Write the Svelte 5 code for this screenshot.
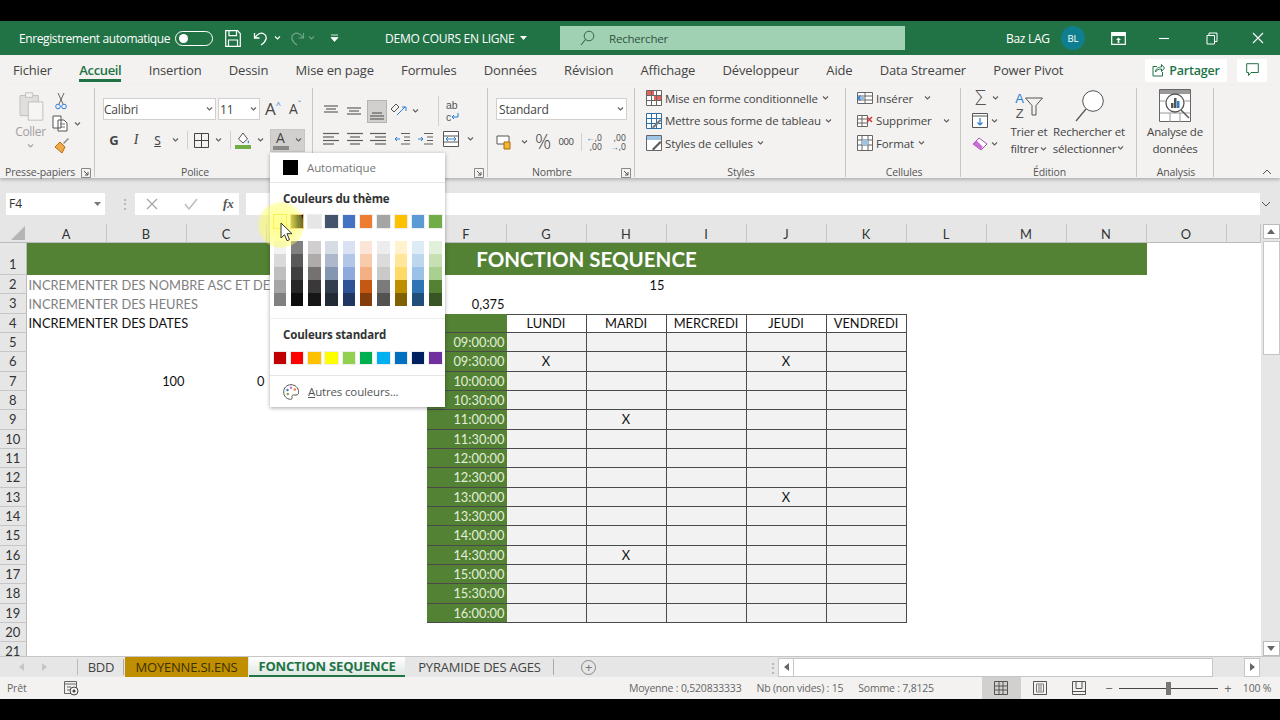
<script>
  const tabs = ['Fichier','Accueil','Insertion','Dessin','Mise en page','Formules','Données','Révision','Affichage','Développeur','Aide','Data Streamer','Power Pivot'];
  const cols = ['A','B','C','D','E','F','G','H','I','J','K','L','M','N','O'];
  const rows = Array.from({length: 21}, (_, i) => i + 1);
  const days = ['LUNDI','MARDI','MERCREDI','JEUDI','VENDREDI'];
  const times = ['09:00:00','09:30:00','10:00:00','10:30:00','11:00:00','11:30:00','12:00:00','12:30:00','13:00:00','13:30:00','14:00:00','14:30:00','15:00:00','15:30:00','16:00:00'];
  // row number -> day index
  const marks = {6:[0,3], 9:[1], 13:[3], 16:[1]};

  // alignment icons: [x1, x2, y] for each stroke
  const alignTop = [[1,15,2],[3,13,5],[1,15,8]];
  const alignMid = [[1,15,4],[3,13,7],[1,15,10]];
  const alignBot = [[3,13,6],[1,15,9],[1,15,12]];
  const alignLeft = [[0,16,1.5],[0,11,5],[0,16,8.5],[0,11,12]];
  const alignCenter = [[0,16,1.5],[3,13,5],[0,16,8.5],[3,13,12]];
  const alignRight = [[0,16,1.5],[5,16,5],[0,16,8.5],[5,16,12]];

  const theme = [
    ['#ffffff','#f2f2f2','#d9d9d9','#bfbfbf','#a6a6a6','#808080'],
    ['#000000','#808080','#595959','#404040','#262626','#0d0d0d'],
    ['#e7e6e6','#d0cece','#afabab','#767171','#3a3838','#171616'],
    ['#44546a','#d6dce4','#adb9ca','#8497b0','#333f4f','#222b35'],
    ['#4472c4','#d9e1f2','#b4c6e7','#8ea9db','#2f5496','#203764'],
    ['#ed7d31','#fce4d6','#f8cbad','#f4b084','#c65911','#833c0c'],
    ['#a5a5a5','#ededed','#dbdbdb','#c9c9c9','#7b7b7b','#525252'],
    ['#ffc000','#fff2cc','#ffe699','#ffd966','#bf8f00','#806000'],
    ['#5b9bd5','#ddebf7','#bdd7ee','#9bc2e6','#2f75b5','#1f4e78'],
    ['#70ad47','#e2efda','#c6e0b4','#a9d08e','#548235','#375623']
  ];
  const standard = ['#c00000','#ff0000','#ffc000','#ffff00','#92d050','#00b050','#00b0f0','#0070c0','#002060','#7030a0'];
</script>

{#snippet caret(w = 9, color = '#605e5c')}
  <svg class="caret" width={w} height="10" viewBox="0 0 9 10"><path d="M2 3.5l2.5 2.5L7 3.5" fill="none" stroke={color} stroke-width="1.1"/></svg>
{/snippet}

{#snippet launcher()}
  <svg class="launch" width="10" height="10" viewBox="0 0 10 10"><path d="M.5 9.5v-9h9v9z" fill="none" stroke="#8a8886"/><path d="M3 3l4 4M7 4v3H4" fill="none" stroke="#555"/></svg>
{/snippet}

{#snippet lines(strokes)}
  <svg width="16" height="14" viewBox="0 0 16 14">
    {#each strokes as s}<line x1={s[0]} x2={s[1]} y1={s[2]} y2={s[2]} stroke="#605e5c" stroke-width="1.2"/>{/each}
  </svg>
{/snippet}

<div class="screen">
  <header class="titlebar">
    <span class="autosave">Enregistrement automatique</span>
    <span class="toggle"><i></i></span>
    <svg class="save" width="16" height="17" viewBox="0 0 16 17"><path d="M.7.7h11.8l2.8 2.8v12.8H.7zM4 .7v5h7.5v-5M3.5 16.3V10h9v6.3" fill="none" stroke="#fff" stroke-width="1.2"/></svg>
    <svg class="undo" width="17" height="17" viewBox="0 0 17 17"><path d="M1.5 3v5h5M2 8c2-4 6-6 9-4 3.500 2 3 7-3 11" fill="none" stroke="#fff" stroke-width="1.3"/></svg>
    {@render caret(9, '#fff')}
    <svg class="redo" width="17" height="17" viewBox="0 0 17 17"><path d="M15.500 3v5h-5M15 8c-2-4-6-6-9-4-3.500 2-3 7 3 11" fill="none" stroke="#6ea488" stroke-width="1.2"/></svg>
    {@render caret(9, '#6ea488')}
    <svg class="qat" width="9" height="10" viewBox="0 0 9 10"><path d="M1 2h7M1 4.500h7L4.500 8.500z" fill="#fff" stroke="#fff" stroke-width=".8"/></svg>
    <span class="doc">DEMO COURS EN LIGNE</span>
    <svg class="doc-caret" width="7" height="4" viewBox="0 0 7 4"><path d="M0 0h7L3.500 4z" fill="#fff"/></svg>
    <div class="search">
      <svg width="16" height="17" viewBox="0 0 16 17"><circle cx="10" cy="6" r="4.800" fill="none" stroke="#2f6b4a" stroke-width="1"/><path d="M6.500 9.500L2 15" stroke="#2f6b4a" stroke-width="1.100"/></svg>
      <span>Rechercher</span>
    </div>
    <span class="user">Baz LAG</span>
    <span class="avatar">BL</span>
    <svg class="display" width="15" height="13" viewBox="0 0 15 13"><path d="M.7.7h13.600v11.600H.7z" fill="none" stroke="#fff" stroke-width="1.200"/><path d="M1 1h13v3H1z" fill="#fff"/><path d="M7.500 5.500l-2.500 2.500h1.700v3h1.600v-3H10z" fill="#fff"/></svg>
    <svg class="win min" width="12" height="12" viewBox="0 0 12 12"><path d="M1 6.500h10" stroke="#fff" stroke-width="1.100"/></svg>
    <svg class="win rest" width="12" height="13" viewBox="0 0 12 13"><path d="M1 3.500h7.500v8.500H1z M3 3.500V1h8v8.500H8.500" fill="none" stroke="#fff"/></svg>
    <svg class="win close" width="12" height="12" viewBox="0 0 12 12"><path d="M1 1l10 10M11 1L1 11" stroke="#fff" stroke-width="1.100"/></svg>
  </header>

  <nav class="tabs">
    {#each tabs as t}
      <span class="tab" class:active={t === 'Accueil'}>{t}</span>
    {/each}
    <button class="share">
      <svg width="13" height="14" viewBox="0 0 13 14"><path d="M5 3.500H1v9.500h9.500V9" fill="none" stroke="#217346"/><path d="M3.500 9c0-3.500 3-5 6-5V1.500L12.500 5l-3 3.500V6c-3 0-5 1-6 3z" fill="none" stroke="#217346"/></svg>
      Partager
    </button>
    <button class="comment">
      <svg width="13" height="14" viewBox="0 0 13 14"><path d="M.7.700h11.600v8.800H5l-2.500 3V9.500H.7z" fill="none" stroke="#217346"/></svg>
    </button>
  </nav>

  <section class="ribbon">
    <div class="group clip">
      <div class="body clipbody">
        <div class="paste">
          <svg width="28" height="31" viewBox="0 0 30 34"><path d="M3 5h20v22H3z" fill="#e1dfdd" stroke="#bdbbb9"/><path d="M9 2h8v5H9z" fill="#f3f2f1" stroke="#bdbbb9"/><path d="M12 12h16v20H12z" fill="#f6f5f4" stroke="#bdbbb9"/></svg>
          <span>Coller</span>
          {@render caret(9, '#a19f9d')}
        </div>
        <div class="cliptools">
          <svg width="12" height="18" viewBox="0 0 12 18"><path d="M3 1l5 11M9 1L4 12" stroke="#666" fill="none"/><circle cx="3" cy="14.500" r="2.300" fill="none" stroke="#2b7cd3"/><circle cx="9" cy="14.500" r="2.300" fill="none" stroke="#2b7cd3"/></svg>
          <div class="row">
            <svg width="17" height="17" viewBox="0 0 17 17"><path d="M1 1h8v12H1zM6 5h6l3 3v8H6z" fill="#fff" stroke="#555"/><path d="M8 9h5M8 12h5" stroke="#777"/></svg>
            {@render caret()}
          </div>
          <svg width="16" height="17" viewBox="0 0 16 17"><path d="M9 6l5-5 1 1-5 5z" fill="#888"/><path d="M6 5l5 5-3 6-7-6z" fill="#f0a94a" stroke="#b76e10"/></svg>
        </div>
      </div>
      <div class="label"><span>Presse-papiers</span>{@render launcher()}</div>
    </div>

    <div class="group police">
      <div class="body">
        <div class="row r1">
          <div class="combo font"><span>Calibri</span>{@render caret()}</div>
          <div class="combo size"><span>11</span>{@render caret()}</div>
          <span class="grow">A<sup>^</sup></span>
          <span class="shrink">A<sup>ˇ</sup></span>
        </div>
        <div class="r2">
          <b class="glyph">G</b>
          <i class="glyph ital">I</i>
          <u class="glyph und">S</u>
          {@render caret()}
          <span class="vsep"></span>
          <svg width="15" height="15" viewBox="0 0 15 15"><path d="M.5.500h14v14H.5zM7.500.500v14M.5 7.500h14" fill="none" stroke="#444"/></svg>
          {@render caret()}
          <span class="vsep"></span>
          <svg width="16" height="17" viewBox="0 0 16 17"><path d="M8 1L3.500 7 8 11l4.500-4z" fill="#fff" stroke="#555"/><path d="M13 8c1 1.500 1.500 2.500.5 3.200-1 .3-1-1.500-.5-3.200z" fill="#2b7cd3"/><path d="M0 13h16v4H0z" fill="#70ad47"/></svg>
          {@render caret()}
          <div class="fontcolor">
            <span class="a-letter">A<i></i></span>
            {@render caret()}
          </div>
        </div>
      </div>
      <div class="label center polabel">Police</div>
    </div>

    <div class="group align">
      <div class="body alignbody">
        <div class="a1">
          {@render lines(alignTop)}
          {@render lines(alignMid)}
          <span class="sel">{@render lines(alignBot)}</span>
          <svg width="20" height="17" viewBox="0 0 20 17"><path d="M4 9l-3-3 5-5 3 3z" fill="none" stroke="#555"/><path d="M7 12l8-8M12 4h4v4" fill="none" stroke="#2b7cd3"/></svg>
          {@render caret()}
          <span class="vsep tall"></span>
          <span class="ab"><span>ab</span><span class="wrapc">c<svg width="10" height="9" viewBox="0 0 10 9"><path d="M7 0v4H1M3 2L1 4l2 2" fill="none" stroke="#2b7cd3"/></svg></span></span>
        </div>
        <div class="a2">
          {@render lines(alignLeft)}
          {@render lines(alignCenter)}
          {@render lines(alignRight)}
          <svg width="16" height="14" viewBox="0 0 16 14"><path d="M7 1.500h9M10 5h6M10 8.500h6M7 12h9" stroke="#605e5c"/><path d="M6 7H1M3 5L1 7l2 2" fill="none" stroke="#2b7cd3"/></svg>
          <svg width="16" height="14" viewBox="0 0 16 14"><path d="M7 1.500h9M10 5h6M10 8.500h6M7 12h9" stroke="#605e5c"/><path d="M1 7h5M4 5l2 2-2 2" fill="none" stroke="#2b7cd3"/></svg>
          <svg width="16" height="16" viewBox="0 0 16 16"><path d="M.5.500h15v15H.5z" fill="#fff" stroke="#555"/><path d="M1 5h14M1 11h14" stroke="#555"/><path d="M3 8h10M5 6L3 8l2 2M11 6l2 2-2 2" fill="none" stroke="#2b7cd3"/></svg>
          {@render caret()}
        </div>
      </div>
      <div class="label right">{@render launcher()}</div>
    </div>

    <div class="group number">
      <div class="body">
        <div class="row r1"><div class="combo std"><span>Standard</span>{@render caret()}</div></div>
        <div class="n2">
          <svg width="15" height="16" viewBox="0 0 15 16"><path d="M1 2h12v8H1z" fill="#fff" stroke="#555"/><path d="M8 8h6v7H8z" fill="#f2b53a" stroke="#a86a00"/></svg>
          {@render caret()}
          <span class="pct">%</span>
          <span class="mil">000</span>
          <span class="vsep"></span>
          <span class="dec"><em>←</em>,0<br/>,00</span>
          <span class="dec">,00<br/><em>→</em>,0</span>
        </div>
      </div>
      <div class="label"><span class="nb">Nombre</span>{@render launcher()}</div>
    </div>

    <div class="group styles">
      <div class="body list">
        <div class="line">
          <svg width="16" height="16" viewBox="0 0 16 16"><path d="M.5.500h15v15H.5z" fill="#fff" stroke="#666"/><path d="M1 1h7v5H1zM8 6h7v5H8z" fill="#e8605a"/><path d="M5.500 1v14M10.500 1v14M1 5.500h14M1 10.500h14" stroke="#666"/></svg>
          Mise en forme conditionnelle {@render caret()}
        </div>
        <div class="line">
          <svg width="16" height="16" viewBox="0 0 16 16"><path d="M.5.500h15v15H.5z" fill="#fff" stroke="#2f6ea5"/><path d="M5.500 1v14M10.500 1v14M1 5.500h14M1 10.500h14" stroke="#2f6ea5"/><path d="M6 14l8-8 1.500 1.500-8 8z" fill="#7a7a7a"/></svg>
          Mettre sous forme de tableau {@render caret()}
        </div>
        <div class="line">
          <svg width="16" height="16" viewBox="0 0 16 16"><path d="M.5.500h15v15H.5z" fill="#fff" stroke="#666"/><path d="M1 1h14v4H1z" fill="#9dc3e6"/><path d="M6 14l8-8 1.500 1.500-8 8z" fill="#5a5a5a"/></svg>
          Styles de cellules {@render caret()}
        </div>
      </div>
      <div class="label center">Styles</div>
    </div>

    <div class="group cells">
      <div class="body list">
        <div class="line">
          <svg width="16" height="16" viewBox="0 0 16 16"><path d="M.5 2.500h15v11H.5z" fill="#fff" stroke="#666"/><path d="M1 6h14M1 10h14M8 3v10" stroke="#666"/><path d="M7 8H1M3.500 5.500L1 8l2.500 2.500" fill="none" stroke="#2b7cd3" stroke-width="1.200"/></svg>
          Insérer <span class="wide">{@render caret()}</span>
        </div>
        <div class="line">
          <svg width="16" height="16" viewBox="0 0 16 16"><path d="M.5 2.500h10v11H.5z" fill="#fff" stroke="#666"/><path d="M1 6h9M1 10h9M5 3v10" stroke="#666"/><path d="M10 4l5 5M15 4l-5 5" stroke="#d13438" stroke-width="1.400"/></svg>
          Supprimer <span class="wide">{@render caret()}</span>
        </div>
        <div class="line">
          <svg width="16" height="16" viewBox="0 0 16 16"><path d="M.5.500h15v15H.5z" fill="#fff" stroke="#666"/><path d="M1 5h14M1 10h14M5 1v14M11 1v14" stroke="#666"/><path d="M5 5h6v5H5z" fill="#9dc3e6"/></svg>
          Format {@render caret()}
        </div>
      </div>
      <div class="label center">Cellules</div>
    </div>

    <div class="group edit">
      <div class="body editbody">
        <div class="minis">
          <div class="row"><span class="sigma">Σ</span>{@render caret()}</div>
          <div class="row">
            <svg width="16" height="15" viewBox="0 0 16 15"><path d="M.5.500h15v14H.5z" fill="#fff" stroke="#555"/><path d="M1 3h14" stroke="#555"/><path d="M8 5v7M5.500 9.500L8 12l2.500-2.500" fill="none" stroke="#2b7cd3" stroke-width="1.200"/></svg>
            {@render caret()}
          </div>
          <div class="row">
            <svg width="16" height="14" viewBox="0 0 16 14"><path d="M1 7l6-6 8 6-6 6z" fill="#fff" stroke="#a64ca6"/><path d="M1 7l3.500-3.500 6 6L9 13z" fill="#c86dd7"/></svg>
            {@render caret()}
          </div>
        </div>
        <div class="big sort">
          <div class="sorticon">
            <div class="az"><span class="sa">A</span><span class="sz">Z</span></div>
            <svg width="18" height="19" viewBox="0 0 18 19"><path d="M.5 1h17L11 8.500V18H7V8.500z" fill="none" stroke="#555"/></svg>
          </div>
          <span>Trier et</span>
          <span>filtrer {@render caret()}</span>
        </div>
        <div class="big find">
          <svg width="29" height="32" viewBox="0 0 29 32"><circle cx="18" cy="11" r="10.300" fill="#fff" stroke="#555"/><path d="M11 19L1 31" stroke="#555" stroke-width="1.200"/></svg>
          <span>Rechercher et</span>
          <span>sélectionner {@render caret()}</span>
        </div>
      </div>
      <div class="label center">Édition</div>
    </div>

    <div class="group analysis">
      <div class="body bigbody">
        <svg width="32" height="33" viewBox="0 0 32 33"><path d="M.5.500h31v32H.5z" fill="#fff" stroke="#666"/><path d="M1 1h30v4H1z" fill="#999"/><path d="M1 12h30M1 24h30M11 24v9M21 24v9" stroke="#999"/><circle cx="16" cy="14" r="9" fill="#fff" stroke="#555" stroke-width="1.300"/><path d="M12 19v-5h2.500v5zM15 19V9h2.500v10z" fill="#555"/><path d="M18 19v-7h2.500v7z" fill="#2b7cd3"/><path d="M22 21l8 8" stroke="#555" stroke-width="1.500"/></svg>
        <span>Analyse de</span>
        <span>données</span>
      </div>
      <div class="label center">Analysis</div>
    </div>

    <div class="collapse">
      <svg width="10" height="6" viewBox="0 0 10 6"><path d="M1 5l4-4 4 4" fill="none" stroke="#555"/></svg>
    </div>
  </section>

  <section class="formula">
    <div class="namebox"><span>F4</span><svg width="7" height="4" viewBox="0 0 7 4"><path d="M0 0h7L3.500 4z" fill="#777"/></svg></div>
    <span class="fdots">⋮</span>
    <div class="fbtns">
      <svg width="12" height="12" viewBox="0 0 12 12"><path d="M1 1l10 10M11 1L1 11" stroke="#a6a6a6" stroke-width="1.300"/></svg>
      <svg width="14" height="12" viewBox="0 0 14 12"><path d="M1 6l4 5 8-10" fill="none" stroke="#bdbdbd" stroke-width="1.500"/></svg>
      <i>fx</i>
    </div>
    <div class="finput"></div>
    <svg class="fcaret" width="10" height="6" viewBox="0 0 10 6"><path d="M1 1l4 4 4-4" fill="none" stroke="#555"/></svg>
  </section>

  <section class="sheet">
    <div class="grid">
      <div class="corner"><svg width="14" height="14" viewBox="0 0 14 14"><path d="M14 0v14H0z" fill="#b5b5b5"/></svg></div>
      {#each cols as c}<div class="colh">{c}</div>{/each}
      <div class="colh"></div>

      {#each rows as r}
        <div class="rowh" class:tallrow={r === 1} style:grid-row={r + 1}>{r}</div>
      {/each}

      <div class="banner">FONCTION SEQUENCE</div>

      <div class="cell muted r2c">INCREMENTER DES NOMBRE ASC ET DES</div>
      <div class="cell muted r3c">INCREMENTER DES HEURES</div>
      <div class="cell r4c">INCREMENTER DES DATES</div>
      <div class="cell num r7b">100</div>
      <div class="cell num r7c">0</div>
      <div class="cell num r2h">15</div>
      <div class="cell num r3f">0,375</div>

      <div class="timehead"></div>
      {#each days as d, i}
        <div class="day" style:grid-column={8 + i}>{d}</div>
      {/each}
      {#each times as t, i}
        <div class="time" style:grid-row={i + 6}>{t}</div>
        {#each days as d, j}
          <div class="slot" style:grid-row={i + 6} style:grid-column={8 + j}>{(marks[i + 5] || []).includes(j) ? 'X' : ''}</div>
        {/each}
      {/each}
    </div>
    <aside class="vscroll">
      <span class="arrowbox"><svg width="8" height="5" viewBox="0 0 8 5"><path d="M4 0l4 5H0z" fill="#666"/></svg></span>
      <span class="vthumb"></span>
      <span class="vtrack"></span>
      <span class="arrowbox"><svg width="8" height="5" viewBox="0 0 8 5"><path d="M0 0h8L4 5z" fill="#666"/></svg></span>
    </aside>
  </section>

  <section class="sheettabs">
    <div class="nav">
      <svg width="5" height="8" viewBox="0 0 5 8"><path d="M5 0v8L0 4z" fill="#c8c6c4"/></svg>
      <svg width="5" height="8" viewBox="0 0 5 8"><path d="M0 0v8l5-4z" fill="#c8c6c4"/></svg>
    </div>
    <span class="stab bdd">BDD</span>
    <span class="stab gold">MOYENNE.SI.ENS</span>
    <span class="stab current">FONCTION SEQUENCE</span>
    <span class="stab pyr">PYRAMIDE DES AGES</span>
    <span class="plus">+</span>
    <span class="hdots">⋮</span>
    <div class="hscroll">
      <span class="harrow"><svg width="5" height="8" viewBox="0 0 5 8"><path d="M5 0v8L0 4z" fill="#666"/></svg></span>
      <span class="hthumb"></span>
      <span class="htrack"></span>
      <span class="harrow"><svg width="5" height="8" viewBox="0 0 5 8"><path d="M0 0v8l5-4z" fill="#666"/></svg></span>
    </div>
  </section>

  <footer class="status">
    <span class="ready">Prêt</span>
    <svg class="macro" width="15" height="16" viewBox="0 0 15 16"><path d="M.5 1.500h12v12H.5z" fill="none" stroke="#666"/><path d="M1 4h11M3 7h4M3 10h4" stroke="#666"/><circle cx="10" cy="11" r="4" fill="#f3f2f1" stroke="#444"/><circle cx="10" cy="11" r="1.500" fill="#444"/></svg>
    <span class="stat first">Moyenne : 0,520833333</span>
    <span class="stat">Nb (non vides) : 15</span>
    <span class="stat">Somme : 7,8125</span>
    <span class="view on"><svg width="14" height="14" viewBox="0 0 14 14"><path d="M.5.500h13v13H.5zM5 .500v13M9 .500v13M.5 5h13M.5 9h13" fill="none" stroke="#555"/></svg></span>
    <span class="view"><svg width="14" height="14" viewBox="0 0 14 14"><path d="M.5.500h13v13H.5z" fill="none" stroke="#555"/><path d="M3.500 3h7v8h-7zM5 5h4M5 7h4M5 9h4" fill="none" stroke="#777"/></svg></span>
    <span class="view"><svg width="14" height="14" viewBox="0 0 14 14"><path d="M.5.500h13v13H.5zM4 .500v7h6v-7M.5 10.500h13" fill="none" stroke="#555"/></svg></span>
    <span class="zbtn">−</span>
    <span class="slider"><i></i></span>
    <span class="zbtn">+</span>
    <span class="pctz">100 %</span>
  </footer>

  <!-- font colour dropdown, lies over the ribbon and the sheet -->
  <div class="popup">
    <div class="auto"><span class="blk"></span>Automatique</div>
    <h4>Couleurs du thème</h4>
    <div class="swatches top">
      {#each theme as t, i}
        <span class="sw" class:hoverw={i === 0} class:hoverb={i === 1} style:background={t[0]}></span>
      {/each}
    </div>
    <div class="swatches shades">
      {#each theme as t}
        <div class="shade">
          {#each t.slice(1) as c}<span style:background={c}></span>{/each}
        </div>
      {/each}
    </div>
    <div class="psep"></div>
    <h4 class="std-title">Couleurs standard</h4>
    <div class="swatches">
      {#each standard as c}<span class="sw" style:background={c}></span>{/each}
    </div>
    <div class="more">
      <svg width="16" height="16" viewBox="0 0 16 16"><path d="M8 .7C3.500.7.700 4 .7 8c0 4 3 7.300 6.800 7.300 1.500 0 2-1 1.500-2-.6-1.200.2-2.300 1.500-2.300h2.500c1.800 0 2.800-1.200 2.800-3C15.300 3.500 12 .7 8 .7z" fill="#fff" stroke="#555"/><circle cx="4.500" cy="6" r="1.200" fill="#4472c4"/><circle cx="8" cy="3.800" r="1.200" fill="#c86dd7"/><circle cx="11.800" cy="5.500" r="1.200" fill="#ed7d31"/><circle cx="4.800" cy="10" r="1.200" fill="#70ad47"/></svg>
      <span><u>A</u>utres couleurs...</span>
    </div>
  </div>

  <div class="halo"></div>
  <svg class="pointer" width="14" height="20" viewBox="0 0 14 20"><path d="M1 1v15l3.500-3.300 2.500 6 2.500-1-2.500-6H12z" fill="#fff" stroke="#333" stroke-width="1"/></svg>
</div>

<style>
  :global(body) { margin: 0; background: #000; }
  .screen {
    position: relative;
    width: 1280px;
    height: 720px;
    overflow: hidden;
    background: #000;
    padding: 21px 0;
    box-sizing: border-box;
    display: flex;
    flex-direction: column;
    font-family: "Open Sans", "Noto Sans", sans-serif;
    color: #444;
    font-size: 11.500px;
  }
  svg { flex: none; display: block; }
  .row { display: flex; align-items: center; }

  /* title bar */
  .titlebar { height: 34px; background: #217346; color: #fff; display: flex; align-items: center; flex: none; font-size: 12px; padding-left: 19px; }
  .autosave { width: 156px; white-space: nowrap; letter-spacing: -.4px; }
  .toggle { width: 38px; height: 15px; border: 1.200px solid #fff; border-radius: 9px; display: flex; align-items: center; padding-left: 3px; box-sizing: border-box; }
  .toggle i { width: 9px; height: 9px; border-radius: 50%; background: #fff; }
  .save { margin-left: 12px; }
  .undo { margin-left: 12px; margin-right: 3px; }
  .redo { margin-left: 6px; margin-right: 2px; }
  .qat { margin-left: 14px; }
  .doc { margin-left: 46px; width: 133px; white-space: nowrap; letter-spacing: -.25px; }
  .doc-caret { margin-left: 2px; }
  .search { margin-left: 33px; width: 345px; height: 24px; background: #a0d1b3; color: #31513f; display: flex; align-items: center; padding-left: 19px; gap: 14px; box-sizing: border-box; letter-spacing: -.2px; font-size: 11.500px; }
  .user { margin-left: 101px; width: 50px; white-space: nowrap; letter-spacing: -.3px; }
  .avatar { margin-left: 5px; width: 24px; height: 24px; border-radius: 50%; background: #0f7f8f; font-size: 9.500px; display: flex; align-items: center; justify-content: center; }
  .display { margin-left: 26px; }
  .min { margin-left: 32px; }
  .rest { margin-left: 36px; }
  .close { margin-left: 34px; }

  /* tabs */
  .tabs { height: 30px; background: #f3f2f1; display: flex; align-items: center; gap: 27.300px; padding-left: 13px; flex: none; font-size: 13px; color: #444; position: relative; letter-spacing: -.15px; white-space: nowrap; }
  .tab { height: 30px; line-height: 30px; position: relative; }
  .tab.active { color: #217346; font-weight: 600; letter-spacing: -.35px; }
  .tab.active::after { content: ""; position: absolute; left: 0; right: 0; bottom: 3px; height: 3px; background: #217346; }
  .share { margin-left: auto; width: 82px; height: 23px; background: #fff; border: none; border-radius: 2px; color: #217346; font: 600 12.500px "Open Sans", sans-serif; letter-spacing: -.2px; display: flex; align-items: center; justify-content: center; gap: 4px; padding: 0; }
  .comment { margin-left: -17.300px; margin-right: 13px; width: 30px; height: 23px; background: #fff; border: none; border-radius: 2px; display: flex; align-items: center; justify-content: center; padding: 0; }

  /* ribbon */
  .ribbon { height: 93px; background: #f3f2f1; display: flex; flex: none; box-shadow: 0 2px 3px rgba(0,0,0,.22); position: relative; z-index: 1; }
  .group { height: 89px; margin-top: 3px; border-right: 1px solid #c8c6c4; box-sizing: border-box; display: flex; flex-direction: column; flex: none; }
  .body { flex: 1; min-height: 0; }
  .label { height: 11px; line-height: 11px; font-size: 10.500px; color: #555; display: flex; align-items: center; justify-content: space-between; padding: 0 3px 0 5px; white-space: nowrap; letter-spacing: -.15px; transform: translateY(1px); }
  .label.center { justify-content: center; }
  .label.right { justify-content: flex-end; }
  .polabel { padding-right: 30px; }
  .combo { height: 22px; background: #fff; border: 1px solid #d2d0ce; box-sizing: border-box; display: flex; align-items: center; justify-content: space-between; padding: 0 1px 0 2px; color: #444; font-size: 12px; letter-spacing: -.2px; }

  .clip { width: 95px; }
  .clipbody { display: flex; }
  .paste { width: 48px; padding: 3px 0 0 13px; box-sizing: border-box; display: flex; flex-direction: column; align-items: center; color: #a19f9d; font-size: 12px; letter-spacing: -.3px; }
  .paste span { margin-top: 1px; line-height: 18px; }
  .cliptools { margin-left: -7px; padding-top: 4px; display: flex; flex-direction: column; gap: 5px; }
  .cliptools > svg:first-child { margin-left: 14px; }
  .cliptools > svg:last-child { margin-left: 13px; }
  .cliptools .row { gap: 4px; margin-left: 11px; }

  .police { width: 218px; padding-left: 8px; }
  .r1 { margin-top: 10px; height: 22px; }
  .font { width: 113px; padding-left: 0; }
  .size { width: 42px; margin-left: 2px; padding-left: 1px; }
  .grow { margin-left: 5px; font-size: 17px; color: #444; width: 24px; line-height: 20px; white-space: nowrap; }
  .shrink { font-size: 14px; color: #444; width: 22px; line-height: 20px; white-space: nowrap; }
  sup { font-size: 9px; line-height: 0; color: #2b7cd3; }
  .r2 { margin-top: 8px; height: 24px; display: grid; grid-template-columns: 22px 22px 21px 14px 10px 18px 16px 8px 18px 16px 37px; align-items: center; justify-items: center; }
  .glyph { font-family: "Noto Sans", sans-serif; font-size: 13px; color: #444; }
  .ital { font-family: "Liberation Serif", serif; font-size: 14px; }
  .und { font-size: 12px; }
  .vsep { width: 1px; height: 18px; background: #d2d0ce; flex: none; }
  .fontcolor { justify-self: end; width: 35px; height: 23px; background: #d2d0ce; display: flex; align-items: center; box-sizing: border-box; border: 1px solid #c8c6c4; padding-left: 1px; }
  .a-letter { font-size: 14px; line-height: 14px; color: #444; width: 17px; display: flex; flex-direction: column; align-items: center; }
  .a-letter i { width: 16px; height: 4px; background: #8a8886; margin-top: 1px; }
  .fontcolor .caret { margin-left: 5px; }

  .align { width: 175px; padding-left: 7px; }
  .alignbody { display: flex; flex-direction: column; }
  .a1 { height: 23px; margin-top: 8px; display: grid; grid-template-columns: 22px 24.500px 21px 24px 8px 19px 30px; align-items: center; justify-items: center; }
  .a1 .sel { width: 20px; height: 23px; background: #d2d0ce; border: 1px solid #b5b3b1; box-sizing: border-box; display: flex; align-items: flex-end; justify-content: center; padding-bottom: 1px; }
  .tall { height: 30px; justify-self: end; }
  .ab { font: 10.500px/12px "Liberation Sans", sans-serif; color: #555; display: flex; flex-direction: column; }
  .wrapc { display: flex; align-items: center; }
  .a2 { height: 23px; margin-top: 8px; display: grid; grid-template-columns: 24px 23px 24px 23px 24px 28px 11px; align-items: center; justify-items: center; margin-left: -1px; }

  .number { width: 147px; padding-left: 8px; }
  .std { width: 131px; }
  .n2 { margin-top: 8px; height: 24px; display: grid; grid-template-columns: 15px 26px 12px 30px 4px 22px 26px; align-items: center; justify-items: center; }
  .number .label { padding-left: 0; }
  .nb { margin-left: 36px; }
  .pct { font-size: 20px; color: #444; font-weight: 300; }
  .mil { font-size: 9.500px; letter-spacing: -.5px; margin-left: 4px; }
  .dec { font-size: 8.500px; line-height: 9px; color: #444; white-space: nowrap; text-align: right; }
  .dec em { color: #2b7cd3; font-style: normal; }

  .list { display: flex; flex-direction: column; padding: 0 0 0 11px; margin-top: -1px; }
  .line { height: 22.500px; display: flex; align-items: center; gap: 3px; white-space: nowrap; font-size: 11.500px; color: #444; letter-spacing: -.13px; }
  .styles { width: 211px; }
  .cells { width: 115px; }
  .wide { margin-left: 7px; }

  .edit { width: 176px; }
  .editbody { display: flex; padding-left: 11px; }
  .minis { width: 40px; padding-top: 1px; display: flex; flex-direction: column; gap: 6px; }
  .minis .row { height: 17px; gap: 2px; }
  .sigma { font-size: 20px; line-height: 17px; width: 17px; color: #555; font-weight: 300; text-align: center; }
  .big { display: flex; flex-direction: column; align-items: center; white-space: nowrap; font-size: 11.500px; line-height: 17px; letter-spacing: -.2px; color: #444; }
  .big span { display: flex; align-items: center; }
  .sort { width: 34px; padding-top: 2px; }
  .sorticon { height: 32px; width: 31px; display: flex; align-items: center; margin-bottom: 1px; }
  .az { display: flex; flex-direction: column; width: 12px; margin-right: -1px; font: 13px/15px "Liberation Sans", sans-serif; text-align: center; color: #555; }
  .big .sa { color: #2b7cd3; justify-content: center; }
  .big .sz { justify-content: center; }
  .find { width: 78px; margin-left: 4px; padding-top: 2px; }
  .find svg { margin-bottom: 1px; }

  .analysis { width: 77px; }
  .bigbody { display: flex; flex-direction: column; align-items: center; padding-top: 1px; font-size: 11.500px; line-height: 17px; letter-spacing: -.2px; white-space: nowrap; }
  .bigbody svg { margin-bottom: 1px; }
  .collapse { margin-left: 48px; margin-top: 84px; }

  /* formula bar */
  .formula { height: 48px; background: #e6e6e6; flex: none; display: flex; align-items: center; padding: 3px 0 0 6px; box-sizing: border-box; }
  .namebox { width: 99px; height: 22px; background: #fff; display: flex; align-items: center; justify-content: space-between; padding: 0 4px 0 3px; box-sizing: border-box; font-size: 12px; color: #333; }
  .fdots { margin-left: 13px; width: 17px; color: #aaa; font-size: 14px; }
  .fbtns { width: 104px; height: 22px; background: #fff; display: flex; align-items: center; padding-left: 11px; gap: 26px; box-sizing: border-box; }
  .fbtns i { font: italic 700 13px "Liberation Serif", serif; color: #555; margin-left: -1px; }
  .finput { margin-left: 7px; width: 1014px; height: 22px; background: #fff; }
  .fcaret { margin-left: 1px; }

  /* sheet */
  .sheet { height: 432px; flex: none; background: #fff; display: flex; overflow: hidden; margin-top: -2px; }
  .grid {
    width: 1261px;
    flex: none;
    overflow: hidden;
    display: grid;
    grid-template-columns: 26.500px repeat(15, 80px) 1fr;
    grid-template-rows: 19px 32px repeat(20, 19.333px);
    font-family: Lato, "Liberation Sans", sans-serif;
    font-size: 12.850px;
    color: #111;
  }
  .corner { background: #e6e6e6; display: flex; align-items: flex-end; justify-content: flex-end; padding: 0 2px 2px 0; border-bottom: 1px solid #bbb; box-sizing: border-box; }
  .colh { background: #e6e6e6; border-bottom: 1px solid #bbb; border-right: 1px solid #c6c6c6; box-sizing: border-box; text-align: center; line-height: 19px; color: #333; padding-top: 1px; }
  .rowh { grid-column: 1; background: #e6e6e6; border-bottom: 1px solid #c6c6c6; border-right: 1px solid #bbb; box-sizing: border-box; display: flex; align-items: center; justify-content: center; color: #333; font-size: 13px; }
  .tallrow { align-items: flex-end; padding-bottom: 2px; }
  .banner { grid-row: 2; grid-column: 2 / 16; background: #548235; color: #fff; font-weight: 700; font-size: 20.500px; display: flex; align-items: center; justify-content: center; }
  .cell { white-space: nowrap; display: flex; align-items: center; padding: 0 2px; overflow: visible; }
  .muted { color: #7f7f7f; }
  .num { justify-content: flex-end; }
  .r2c { grid-row: 3; grid-column: 2 / 7; }
  .r3c { grid-row: 4; grid-column: 2 / 7; }
  .r4c { grid-row: 5; grid-column: 2 / 7; }
  .r7b { grid-row: 8; grid-column: 3; }
  .r7c { grid-row: 8; grid-column: 4; }
  .r2h { grid-row: 3; grid-column: 9; }
  .r3f { grid-row: 4; grid-column: 7; }
  .timehead { grid-row: 5; grid-column: 7; background: #548235; border-bottom: 1px solid #4a4a4a; }
  .day { grid-row: 5; border: 1px solid #4a4a4a; border-left: 0; box-sizing: border-box; display: flex; align-items: center; justify-content: center; }
  .time { grid-column: 7; background: #548235; color: #e2efda; border-bottom: 1px solid #4a4a4a; box-sizing: border-box; display: flex; align-items: center; justify-content: flex-end; padding-right: 2px; }
  .slot { background: #f2f2f2; border-right: 1px solid #4a4a4a; border-bottom: 1px solid #4a4a4a; box-sizing: border-box; display: flex; align-items: center; justify-content: center; }

  .vscroll { flex: 1; background: #e6e6e6; display: flex; flex-direction: column; align-items: center; padding: 0 0 0 1px; }
  .arrowbox { width: 17px; height: 15px; background: #fff; border: 1px solid #bbb; box-sizing: border-box; display: flex; align-items: center; justify-content: center; flex: none; }
  .vthumb { width: 17px; height: 114px; margin-top: 2px; background: #fff; border: 1px solid #c6c6c6; box-sizing: border-box; flex: none; }
  .vtrack { flex: 1; }

  /* sheet tabs */
  .sheettabs { height: 21px; background: #e6e6e6; flex: none; display: flex; align-items: center; border-top: 1px solid #c6c6c6; box-sizing: border-box; font-size: 13px; letter-spacing: -.2px; color: #444; white-space: nowrap; }
  .nav { width: 78px; height: 16px; display: flex; align-items: center; gap: 18px; padding-left: 19px; box-sizing: border-box; border-right: 1px solid #bbb; }
  .stab { height: 20px; display: flex; align-items: center; justify-content: center; box-sizing: border-box; flex: none; }
  .bdd { width: 46px; position: relative; }
  .bdd::after { content: ""; position: absolute; right: 0; top: 2px; bottom: 2px; width: 1px; background: #aaa; }
  .gold { width: 123px; background: #bf8f00; color: #3c3000; margin-left: 1px; }
  .current { width: 156px; margin-left: 1px; background: linear-gradient(#fff, #dfe8e2); color: #217346; font-weight: 700; border-bottom: 2px solid #217346; }
  .pyr { width: 149px; position: relative; }
  .pyr::after { content: ""; position: absolute; right: 0; top: 2px; bottom: 2px; width: 1px; background: #aaa; }
  .plus { margin-left: 27px; width: 15px; height: 15px; border: 1px solid #8a8886; border-radius: 50%; box-sizing: border-box; text-align: center; line-height: 12px; font-size: 13px; color: #777; }
  .hdots { margin-left: 170px; color: #aaa; font-size: 14px; width: 12px; }
  .hscroll { width: 482px; height: 19px; display: flex; align-items: center; }
  .harrow { width: 16px; height: 19px; background: #fff; border: 1px solid #c6c6c6; box-sizing: border-box; display: flex; align-items: center; justify-content: center; flex: none; }
  .hthumb { width: 419px; height: 19px; background: #fff; border: 1px solid #c6c6c6; border-left: 0; box-sizing: border-box; flex: none; }
  .htrack { flex: 1; }

  /* status bar */
  .status { height: 22px; background: #f3f2f1; flex: none; display: flex; align-items: center; font-size: 10.500px; color: #666; padding-left: 7px; white-space: nowrap; letter-spacing: -.2px; }
  .ready { width: 57px; }
  .first { margin-left: 550px; }
  .stat { margin-right: 15px; }
  .view { width: 39px; height: 22px; display: flex; align-items: center; justify-content: center; flex: none; }
  .view.on { background: #d2d0ce; margin-left: 33px; }
  .zbtn { font-size: 13px; width: 10px; text-align: center; margin-left: 5px; }
  .slider { width: 99px; height: 1px; background: #444; margin-left: 5px; position: relative; display: block; }
  .slider i { position: absolute; left: 47px; top: -6px; width: 5px; height: 13px; background: #777; }
  .pctz { margin-left: 10px; }

  /* colour dropdown */
  .popup { position: absolute; left: 270px; top: 153px; width: 175px; height: 254px; background: #fff; box-shadow: 0 1px 4px rgba(0,0,0,.35); z-index: 5; box-sizing: border-box; font-size: 11.500px; color: #333; letter-spacing: -.1px; }
  .auto { height: 29px; display: flex; align-items: center; padding-left: 13px; gap: 9px; color: #777; border-bottom: 1px solid #e5e5e5; }
  .blk { width: 15px; height: 15px; background: #000; }
  .popup h4 { margin: 0; font-size: 11.500px; font-weight: 700; padding: 9px 0 0 13px; line-height: 14px; color: #333; letter-spacing: -.15px; }
  .swatches { display: grid; grid-template-columns: repeat(10, 12.500px); column-gap: 4.800px; padding-left: 3.500px; }
  .top { margin-top: 9px; }
  .sw { height: 12.500px; display: block; box-sizing: border-box; outline: 1px solid rgba(0,0,0,.07); }
  .sw.hoverw { outline: 1px solid #e8d24a; }
  .sw.hoverb { background: linear-gradient(90deg, #8a7a20, #000 60%) !important; outline: 1px solid #f0b88a; }
  .shades { margin-top: 13px; }
  .shade { display: flex; flex-direction: column; }
  .shade span { height: 13.100px; display: block; }
  .psep { height: 1px; background: #eee; margin-top: 12px; }
  .popup .std-title { padding-top: 9px; margin-bottom: 10px; }
  .more { margin-top: 11px; border-top: 1px solid #e5e5e5; height: 31px; display: flex; align-items: center; gap: 9px; padding-left: 13px; color: #555; letter-spacing: -.15px; }

  .halo { position: absolute; left: 258px; top: 202px; width: 46px; height: 46px; border-radius: 50%; background: radial-gradient(circle, rgba(255,255,100,.8), rgba(255,255,100,.5) 60%, rgba(255,255,100,0) 100%); z-index: 6; }
  .pointer { position: absolute; left: 280px; top: 222px; z-index: 7; }
</style>
